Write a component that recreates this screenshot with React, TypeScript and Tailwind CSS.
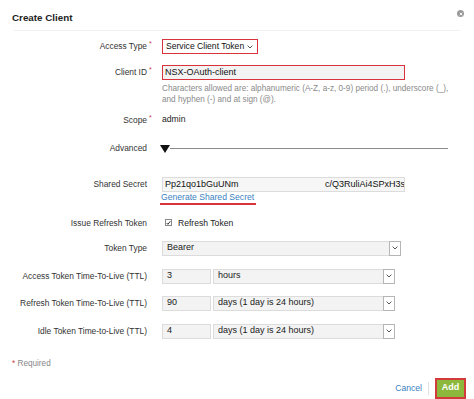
import React from "react";

const Chevron = () => (
  <svg width="6" height="4" viewBox="0 0 6 4" className="block">
    <polyline points="0.6,0.6 3,3 5.4,0.6" fill="none" stroke="#555" strokeWidth="1" />
  </svg>
);

const Label = ({ text, req }: { text: string; req?: boolean }) => (
  <div className="relative w-[147px] shrink-0 text-right text-[8.4px] leading-[15px] text-[#333]">
    {text}
    {req && (
      <span className="absolute left-full top-[-3px] ml-[2px] text-[7px] text-[#c8424a]">*</span>
    )}
  </div>
);

const Row = ({ children, mt }: { children: React.ReactNode; mt: string }) => (
  <div className={`flex h-[15px] items-center ${mt}`}>{children}</div>
);

// grey select with the separate boxed arrow at its right end
const BoxSelect = ({ text, w }: { text: string; w: string }) => (
  <div
    className={`flex h-[15px] ${w} items-center border border-[#dcdcdc] bg-[#f3f3f3] pl-[4px] text-[9px] text-[#1a1a1a]`}
  >
    <span className="flex-1 truncate">{text}</span>
    <span className="-my-px -mr-px flex h-[15px] w-[12px] items-center justify-center border border-[#b5b5b5] bg-white">
      <Chevron />
    </span>
  </div>
);

export default function App() {
  return (
    <div className="flex h-[399px] w-[474px] flex-col bg-white font-['Liberation_Sans',Arial,sans-serif]">
      <div className="flex h-[30px] items-start justify-between pl-[12px] pr-[10px]">
        <div className="pt-[12px] text-[9.8px] font-bold leading-[12px] text-[#222]">Create Client</div>
        <div className="mt-[10px] flex h-[7px] w-[7px] items-center justify-center rounded-full bg-[#9a9a9a]">
          <svg width="4" height="4" viewBox="0 0 4 4">
            <path d="M0.7 0.7 L3.3 3.3 M3.3 0.7 L0.7 3.3" stroke="#fff" strokeWidth="0.9" />
          </svg>
        </div>
      </div>
      <div className="mx-[14px] h-px bg-[#f0f0f0]" />

      <Row mt="mt-[8px]">
        <Label text="Access Type" req />
        <div className="ml-[15px] flex h-[15px] w-[96px] items-center border-[1.5px] border-[#d8323c] bg-white pl-[3px] pr-[4px] text-[8.6px] text-[#111]">
          <span className="flex-1">Service Client Token</span>
          <Chevron />
        </div>
      </Row>

      <Row mt="mt-[11px]">
        <Label text="Client ID" req />
        <div className="ml-[15px] flex h-[15px] w-[243px] items-center border-[1.5px] border-[#d8323c] bg-[#f3f3f3] pl-[2px] text-[9px] text-[#111]">
          NSX-OAuth-client
        </div>
      </Row>
      <div className="ml-[162px] mt-[3px] whitespace-nowrap text-[8.2px] leading-[11px] text-[#8a8a8a]">
        Characters allowed are: alphanumeric (A-Z, a-z, 0-9) period (.), underscore (_),
        <br />
        and hyphen (-) and at sign (@).
      </div>

      <Row mt="mt-[8px]">
        <Label text="Scope" req />
        <div className="ml-[15px] -mt-[2px] text-[8.6px] text-[#222]">admin</div>
      </Row>

      <Row mt="mt-[13px]">
        <Label text="Advanced" />
        <div className="ml-[13px] flex items-center">
          <svg width="10" height="8" viewBox="0 0 10 8" className="block">
            <polygon points="0,0 10,0 5,8" fill="#111" />
          </svg>
          <div className="h-px w-[278px] bg-[#8a8a8a]" />
        </div>
      </Row>

      <Row mt="mt-[21px]">
        <Label text="Shared Secret" />
        <div className="ml-[15px] flex h-[15px] w-[243px] items-center overflow-hidden border border-[#dcdcdc] bg-[#f6f6f6] pl-[2px] text-[9px] text-[#111]">
          <span className="w-[160px] shrink-0">Pp21qo1bGuUNm</span>
          <span className="whitespace-nowrap">c/Q3RuliAi4SPxH3s</span>
        </div>
      </Row>
      <div className="ml-[161px] w-fit">
        <div className="text-[8.6px] leading-[10px] text-[#3b7fc0]">Generate Shared Secret</div>
        <div className="-ml-[1px] mt-[1px] h-[1.5px] w-[96px] bg-[#d8323c]" />
      </div>

      <Row mt="mt-[11px]">
        <Label text="Issue Refresh Token" />
        <div className="ml-[18px] flex items-center gap-[6px]">
          <span className="flex h-[7px] w-[7px] items-center justify-center border border-[#888] bg-white">
            <svg width="6" height="6" viewBox="0 0 6 6">
              <polyline points="0.8,3 2.3,4.6 5.2,0.9" fill="none" stroke="#222" strokeWidth="1.1" />
            </svg>
          </span>
          <span className="text-[8.6px] text-[#222]">Refresh Token</span>
        </div>
      </Row>

      <Row mt="mt-[10px]">
        <Label text="Token Type" />
        <div className="ml-[15px]">
          <BoxSelect text="Bearer" w="w-[239px]" />
        </div>
      </Row>

      {[
        { l: "Access Token Time-To-Live (TTL)", v: "3", u: "hours", mt: "mt-[13px]" },
        { l: "Refresh Token Time-To-Live (TTL)", v: "90", u: "days (1 day is 24 hours)", mt: "mt-[12px]" },
        { l: "Idle Token Time-to-Live (TTL)", v: "4", u: "days (1 day is 24 hours)", mt: "mt-[13px]" },
      ].map((r) => (
        <Row key={r.l} mt={r.mt}>
          <Label text={r.l} />
          <div className="ml-[15px] flex gap-[2px]">
            <div className="flex h-[15px] w-[49px] items-center border border-[#dcdcdc] bg-[#f3f3f3] pl-[4px] text-[9px] text-[#1a1a1a]">
              {r.v}
            </div>
            <BoxSelect text={r.u} w="w-[182px]" />
          </div>
        </Row>
      ))}

      <div className="ml-[12px] mt-[19px] text-[8.2px] leading-[11px] text-[#888]">
        <span className="text-[#c8424a]">*</span> Required
      </div>

      <div className="mt-[9px] flex items-center justify-end pr-[8px]">
        <span className="text-[8.6px] text-[#3b7fc0]">Cancel</span>
        <span className="mx-[6px] h-[13px] w-px bg-[#e2e2e2]" />
        <div className="flex h-[21px] w-[31px] items-center justify-center border-2 border-[#d33a3a] bg-[#8cb83c] text-[9px] font-bold text-white">
          Add
        </div>
      </div>
    </div>
  );
}
